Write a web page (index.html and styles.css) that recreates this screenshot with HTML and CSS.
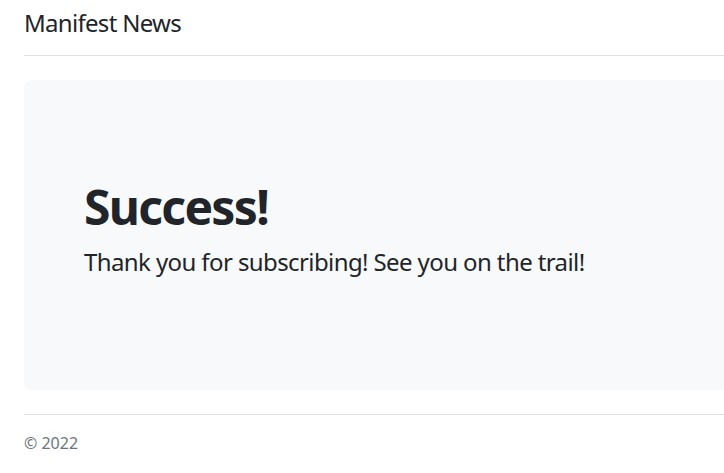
FILE: index.html
```html
<!DOCTYPE html>
<html lang="en">
<head>
<meta charset="utf-8">
<title>Manifest News</title>
<link rel="stylesheet" href="styles.css">
</head>
<body>
<div class="page">
  <main class="container">
    <header class="site-header">
      <a class="brand" href="#">Manifest News</a>
    </header>
    <div class="jumbotron">
      <div class="jumbo-inner">
        <h1 class="title">Success!</h1>
        <p class="lead">Thank you for subscribing! See you on the trail!</p>
      </div>
    </div>
    <footer class="site-footer">© 2022</footer>
  </main>
</div>
</body>
</html>
```

FILE: styles.css
```css
* { box-sizing: border-box; }
html, body {
  margin: 0;
  padding: 0;
  background: #fff;
}
body {
  font-family: "Noto Sans", "Open Sans", sans-serif;
  color: #212529;
  font-size: 16px;
  line-height: 1.5;
}
.page {
  width: 724px;
  height: 473px;
  overflow: hidden;
}
.container {
  width: 1000px;
  margin-left: 24px;
  padding-top: 5px;
}
.site-header {
  display: flex;
  padding-bottom: 14px;
  border-bottom: 1px solid #dee2e6;
  margin-bottom: 24px;
}
.brand {
  font-size: 24px;
  line-height: 36px;
  letter-spacing: -0.7px;
  color: #212529;
  text-decoration: none;
}
.jumbotron {
  background: #f8f9fa;
  border-radius: 8px;
  padding: 48px;
  margin-bottom: 24px;
}
.jumbo-inner {
  padding: 48px 12px;
}
.title {
  margin: 0 0 6px;
  padding-top: 2px;
  font-size: 48px;
  font-weight: 700;
  line-height: 1.2;
  letter-spacing: -1.7px;
}
.lead {
  margin: 0 0 14px;
  padding-top: 2px;
  font-size: 24px;
  line-height: 36px;
  letter-spacing: -0.6px;
}
.site-footer {
  border-top: 1px solid #dee2e6;
  padding-top: 16px;
  color: #6c757d;
  font-size: 16px;
  line-height: 24px;
}
```
